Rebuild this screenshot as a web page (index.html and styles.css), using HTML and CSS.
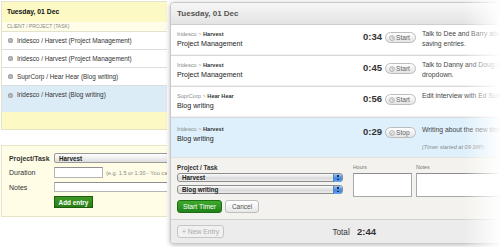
FILE: index.html
```html
<!DOCTYPE html>
<html lang="en">
<head>
  <meta charset="UTF-8" />
  <title>Harvest timesheet</title>
  <link rel="stylesheet" href="styles.css">
</head>
<body>
  <div class="stage">

    <!-- old timesheet, behind -->
    <div class="old">
      <div class="old-day">
        <div class="old-head">Tuesday, 01 Dec</div>
        <div class="old-cols">CLIENT / PROJECT (TASK)</div>
        <div class="old-row"><span class="dot"></span>Iridesco / Harvest (Project Management)</div>
        <div class="old-row"><span class="dot"></span>Iridesco / Harvest (Project Management)</div>
        <div class="old-row"><span class="dot"></span>SuprCorp / Hear Hear (Blog writing)</div>
        <div class="old-row old-active"><span class="dot"></span>Iridesco / Harvest (Blog writing)</div>
        <div class="old-foot"></div>
      </div>

      <div class="old-form">
        <div class="old-field">
          <label>Project/Task</label>
          <div class="old-select">Harvest</div>
        </div>
        <div class="old-field">
          <label>Duration</label>
          <div class="old-input short"></div>
          <span class="hint">(e.g. 1.5 or 1:30 - You can also start a timer)</span>
        </div>
        <div class="old-field">
          <label>Notes</label>
          <div class="old-input"></div>
        </div>
        <div class="old-field">
          <label></label>
          <button class="btn-add">Add entry</button>
        </div>
      </div>
    </div>

    <!-- new timesheet, in front -->
    <div class="new">
      <div class="new-head">Tuesday, 01 Dec</div>

      <div class="entry">
        <div class="task">
          <div class="crumb">Iridesco <span class="sep">&gt;</span> <b>Harvest</b></div>
          <div class="task-name">Project Management</div>
        </div>
        <div class="time">0:34</div>
        <button class="btn-timer"><svg viewBox="0 0 8 8"><circle cx="4" cy="4" r="3.2"/><path d="M4 2.2V4h1.5"/></svg>Start</button>
        <div class="notes">Talk to Dee and Barry about the timer and<br>saving entries.</div>
      </div>

      <div class="entry">
        <div class="task">
          <div class="crumb">Iridesco <span class="sep">&gt;</span> <b>Harvest</b></div>
          <div class="task-name">Project Management</div>
        </div>
        <div class="time">0:45</div>
        <button class="btn-timer"><svg viewBox="0 0 8 8"><circle cx="4" cy="4" r="3.2"/><path d="M4 2.2V4h1.5"/></svg>Start</button>
        <div class="notes">Talk to Danny and Doug about the task<br>dropdown.</div>
      </div>

      <div class="entry">
        <div class="task">
          <div class="crumb">SuprCorp <span class="sep">&gt;</span> <b>Hear Hear</b></div>
          <div class="task-name">Blog writing</div>
        </div>
        <div class="time">0:56</div>
        <button class="btn-timer"><svg viewBox="0 0 8 8"><circle cx="4" cy="4" r="3.2"/><path d="M4 2.2V4h1.5"/></svg>Start</button>
        <div class="notes">Edit interview with Ed Sullivan</div>
      </div>

      <div class="entry running">
        <div class="task">
          <div class="crumb">Iridesco <span class="sep">&gt;</span> <b>Harvest</b></div>
          <div class="task-name">Blog writing</div>
        </div>
        <div class="time">0:29</div>
        <button class="btn-timer"><svg viewBox="0 0 8 8"><circle cx="4" cy="4" r="3.2"/><path d="M2.6 5.4l2.6-2.8"/></svg>Stop</button>
        <div class="notes">Writing about the new timesheet
          <div class="started">(Timer started at 09:38P)</div>
        </div>
      </div>

      <div class="new-form">
        <div class="form-fields">
          <div class="form-col col-task">
            <div class="form-label strong">Project / Task</div>
            <div class="select"><span>Harvest</span><i class="arrows"></i></div>
            <div class="select"><span>Blog writing</span><i class="arrows"></i></div>
          </div>
          <div class="form-col col-hours">
            <div class="form-label">Hours</div>
            <div class="box"></div>
          </div>
          <div class="form-col col-notes">
            <div class="form-label">Notes</div>
            <div class="box"></div>
          </div>
        </div>
        <div class="form-actions">
          <button class="btn-start">Start Timer</button>
          <button class="btn-cancel">Cancel</button>
        </div>
      </div>

      <div class="new-foot">
        <button class="btn-new" disabled>+ New Entry</button>
        <div class="total">Total <b>2:44</b></div>
      </div>
    </div>

  </div>
</body>
</html>
```

FILE: styles.css
```css
* {
  box-sizing: border-box;
}
body {
  margin: 0;
  width: 500px;
  height: 247px;
  overflow: hidden;
  background: #fff;
  font-family: "Liberation Sans", Arial, sans-serif;
  color: #222;
}
button {
  font-family: inherit;
  margin: 0;
  padding: 0;
  cursor: pointer;
}
.stage {
  display: flex;
  align-items: flex-start;
  gap: 3px;
}

/* ---- old timesheet ---- */
.old {
  flex: 0 0 166px;
  margin-left: 1px;
  overflow: hidden;
}
.old-day {
  width: 300px;
  margin-top: 1px;
  border-top: 1px solid #e3e2cf;
  border-left: 1px solid #e3e2cf;
}
.old-head {
  height: 20px;
  line-height: 20px;
  padding-left: 5px;
  background: #fdf9c4;
  font-size: 6.8px;
  font-weight: bold;
  color: #111;
}
.old-cols {
  height: 10px;
  line-height: 9px;
  padding-left: 5px;
  background: #fffde8;
  border-bottom: 1px solid #e4e2cc;
  font-size: 5px;
  color: #888;
}
.old-row {
  display: flex;
  align-items: center;
  height: 18px;
  padding-bottom: 1px;
  border-bottom: 1px solid #dddddd;
  font-size: 6.4px;
  color: #333;
}
.old-active {
  align-items: flex-start;
  height: 26px;
  padding-top: 5px;
  background: #dcecf7;
  border-bottom: none;
}
.dot {
  width: 5px;
  height: 5px;
  margin: 0 4px 0 6px;
  border-radius: 50%;
  background: #b9b9b9;
  box-shadow: inset 0 0 0 1px #a5a5a5;
}
.old-active .dot {
  margin-top: 2px;
}
.old-foot {
  height: 18px;
  background: #fdf9c4;
  border-bottom: 1px solid #e6e3c4;
}
.old-form {
  width: 300px;
  height: 72px;
  margin-top: 15px;
  padding: 7px 0 0 7px;
  background: #fffde6;
  border: 1px solid #e8e5c6;
}
.old-field {
  display: flex;
  align-items: center;
  margin-bottom: 4px;
}
.old-field label {
  flex: 0 0 45px;
  font-size: 7px;
  color: #333;
}
.old-field:first-child label {
  font-weight: bold;
  font-size: 6.9px;
}
.old-select {
  width: 200px;
  height: 10px;
  line-height: 9px;
  padding-left: 4px;
  border: 1px solid #9a9a9a;
  border-radius: 2px;
  background: linear-gradient(#ffffff, #dedede);
  font-size: 6.3px;
  font-weight: bold;
}
.old-input {
  width: 200px;
  height: 11px;
  background: #fff;
  border: 1px solid #b5b5b5;
  border-top-color: #8f8f8f;
}
.old-input.short {
  width: 49px;
}
.old-field:nth-child(3) .old-input {
  height: 10px;
}
.hint {
  margin-left: 3px;
  font-size: 5.6px;
  color: #888;
  white-space: nowrap;
}
.btn-add {
  height: 12px;
  width: 39px;
  border: 1px solid #1f5b10;
  background: linear-gradient(#3d9a25, #2b7f17);
  color: #fff;
  font-size: 6.4px;
  font-weight: bold;
}

/* ---- new timesheet ---- */
.new {
  position: relative;
  flex: 0 0 380px;
  margin-top: 2px;
  background: #fff;
  border: 1px solid #c8c8c8;
  border-radius: 4px;
  box-shadow: 0 1px 5px rgba(0, 0, 0, 0.28);
}
.new::after {
  content: "";
  position: absolute;
  top: -6px;
  bottom: -10px;
  left: 292px;
  right: -10px;
  background: linear-gradient(to right, rgba(255, 255, 255, 0), #fff 38px);
}
.new-head {
  height: 22px;
  line-height: 21px;
  padding-left: 6px;
  border-radius: 4px 4px 0 0;
  background: linear-gradient(#f7f7f7, #e3e3e3);
  border-bottom: 1px solid #cdcdcd;
  font-size: 8px;
  font-weight: bold;
  color: #555;
}
.entry {
  display: grid;
  grid-template-columns: 1fr auto 31px 125px;
  align-items: start;
  height: 31px;
  padding: 0 8px 0 6px;
  border-bottom: 1px solid #d8d8d8;
  box-shadow: inset 0 -1px 0 #f1f1f1;
}
.entry.running {
  height: 39px;
  padding-top: 2px;
  background: #def0fb;
  border-bottom: none;
  box-shadow: none;
}
.task {
  padding-top: 5px;
}
.crumb {
  line-height: 9px;
  font-size: 5.6px;
  color: #888;
}
.crumb .sep {
  color: #aaa;
}
.crumb b {
  color: #333;
}
.task-name {
  line-height: 10px;
  font-size: 7.1px;
  color: #222;
}
.time {
  padding: 5px 3px 0 0;
  line-height: 14px;
  font-size: 9.5px;
  font-weight: bold;
  color: #333;
}
.btn-timer {
  display: flex;
  align-items: center;
  gap: 1px;
  height: 11px;
  margin-top: 7px;
  padding-left: 3px;
  border: 1px solid #bcbcbc;
  border-radius: 6px;
  background: linear-gradient(#ffffff, #e4e4e4);
  font-size: 6.6px;
  color: #666;
}
.btn-timer svg {
  width: 6px;
  height: 6px;
  fill: none;
  stroke: #888;
  stroke-width: 0.8;
}
.notes {
  margin-left: 6px;
  padding-top: 4px;
  line-height: 10px;
  font-size: 6.8px;
  color: #444;
  white-space: nowrap;
}
.running .notes {
  padding-top: 5px;
}
.started {
  margin-top: 7px;
  font-size: 5.6px;
  font-style: italic;
  color: #888;
}
.new-form {
  height: 62px;
  padding: 5px 8px 0 6px;
  background: #f3f2ee;
  border-top: 1px solid #e2e1dc;
}
.form-fields {
  display: flex;
}
.form-col {
  display: flex;
  flex-direction: column;
}
.col-task {
  width: 166px;
  margin-right: 10px;
}
.col-hours {
  width: 59px;
  margin-right: 4px;
}
.col-notes {
  flex: 1;
}
.form-label {
  height: 10px;
  line-height: 9px;
  font-size: 5.2px;
  color: #777;
}
.form-label.strong {
  font-size: 6.3px;
  font-weight: bold;
  color: #333;
}
.select {
  display: flex;
  align-items: center;
  justify-content: space-between;
  height: 9px;
  margin-bottom: 3px;
  padding-left: 4px;
  border: 1px solid #8e8e8e;
  border-radius: 3px;
  background: linear-gradient(#fbfbfb, #dadada 60%, #ececec);
  font-size: 6.3px;
  font-weight: bold;
  color: #222;
}
.arrows {
  position: relative;
  width: 9px;
  height: 8px;
  border-radius: 0 2px 2px 0;
  background: linear-gradient(#9cc6f5, #3f86e0 55%, #6aa6ee);
  border-left: 1px solid #5b7fb0;
}
.arrows::before,
.arrows::after {
  content: "";
  position: absolute;
  left: 3px;
  width: 2px;
  height: 1.5px;
  background: #1a2b45;
}
.arrows::before {
  top: 1.5px;
}
.arrows::after {
  bottom: 1.5px;
}
.box {
  height: 24px;
  background: #fff;
  border: 1px solid #a9a9a9;
  border-top-color: #8c8c8c;
}
.form-actions {
  display: flex;
  gap: 3px;
  margin-top: 3px;
}
.btn-start {
  width: 45px;
  height: 13px;
  border: 1px solid #1d6d12;
  border-radius: 3px;
  background: linear-gradient(#3faa2c, #20831a);
  color: #fff;
  font-size: 6.8px;
}
.btn-cancel {
  width: 34px;
  height: 13px;
  border: 1px solid #bdbdbd;
  border-radius: 3px;
  background: linear-gradient(#ffffff, #e8e8e8);
  color: #555;
  font-size: 6.5px;
}
.new-foot {
  display: grid;
  grid-template-columns: 1fr auto 162px;
  align-items: center;
  height: 24px;
  padding: 0 8px 0 6px;
  border-top: 1px solid #d2d2d2;
  border-radius: 0 0 4px 4px;
  background: #ececec;
}
.btn-new {
  justify-self: start;
  width: 47px;
  height: 13px;
  border: 1px solid #c6c6c6;
  border-radius: 3px;
  background: #f1f1f1;
  color: #aaa;
  font-size: 6.8px;
  cursor: default;
}
.total {
  padding-right: 3px;
  font-size: 8.2px;
  color: #333;
}
.total b {
  margin-left: 5px;
  font-size: 9.5px;
}
```
